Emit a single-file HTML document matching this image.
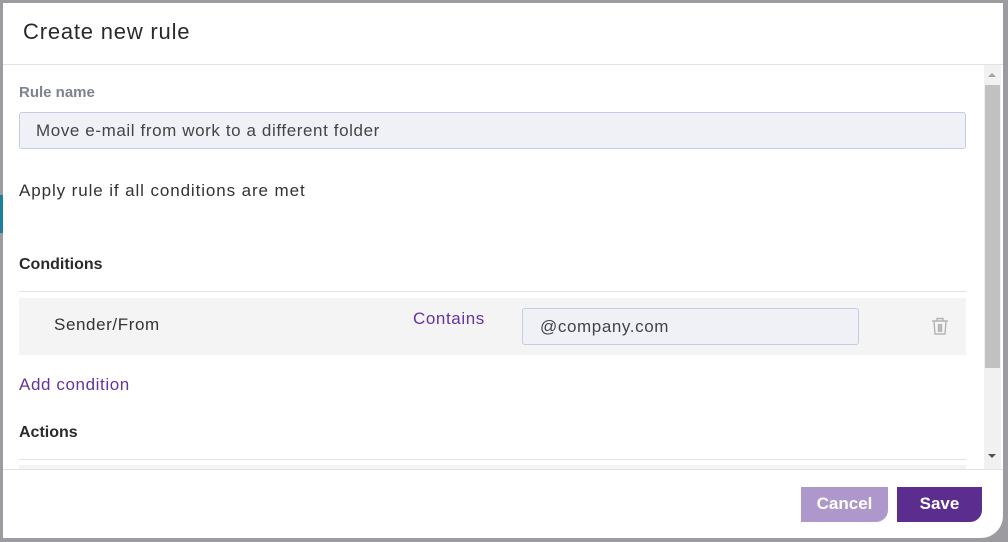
<!DOCTYPE html>
<html><head><meta charset="utf-8"><style>
*{margin:0;padding:0;box-sizing:border-box}
body{width:1008px;height:542px;background:#9c9ca0;position:relative;overflow:hidden;font-family:"Liberation Sans",sans-serif;color:#333}
.dlg{position:absolute;left:3px;top:3px;width:1000px;height:535px;background:#fff;border-bottom-right-radius:22px;overflow:hidden}
.a{position:absolute}
.t{letter-spacing:0.6px}
</style></head><body>
<div class="a" style="left:0;top:195px;width:3px;height:38px;background:#1a7fa0"></div>
<div class="dlg">
 <div class="a" style="left:20px;top:16px;font-size:22px;color:#2a2a2a;letter-spacing:0.8px">Create new rule</div>
 <div class="a" style="left:0;top:61px;width:1000px;height:1px;background:#e2e2e2"></div>
 <div class="a" style="left:16px;top:81px;font-size:15px;font-weight:bold;color:#7d8290">Rule name</div>
 <div class="a t" style="left:16px;top:109px;width:947px;height:37px;background:#f0f1f7;border:1px solid #c5cbe3;border-radius:3px;font-size:17px;color:#444;padding:8px 0 0 16px">Move e-mail from work to a different folder</div>
 <div class="a t" style="left:16px;top:178px;font-size:17px;color:#333;letter-spacing:0.9px">Apply rule if all conditions are met</div>
 <div class="a" style="left:16px;top:253px;font-size:16px;font-weight:bold;color:#2a2a2a">Conditions</div>
 <div class="a" style="left:16px;top:288px;width:947px;height:1px;background:#e2e2e2"></div>
 <div class="a" style="left:16px;top:295px;width:947px;height:57px;background:#f4f4f4"></div>
 <div class="a t" style="left:51px;top:312px;font-size:17px;color:#333">Sender/From</div>
 <div class="a t" style="left:410px;top:306px;font-size:17px;color:#6633a0">Contains</div>
 <div class="a t" style="left:519px;top:305px;width:337px;height:37px;background:#f0f1f7;border:1px solid #c5cbe3;border-radius:3px;font-size:17px;color:#444;padding:8px 0 0 17px">@company.com</div>
 <svg class="a" style="left:927px;top:313px" width="20" height="20" viewBox="0 0 20 20" fill="none" stroke="#b4b4b4" stroke-width="1.4"><path d="M2 5h16M7 5V2.5h6V5M4 5l1 13h10l1-13M8.5 8v8M10 8v8M11.5 8v8"/></svg>
 <div class="a t" style="left:16px;top:372px;font-size:17px;color:#6633a0">Add condition</div>
 <div class="a" style="left:16px;top:421px;font-size:16px;font-weight:bold;color:#2a2a2a">Actions</div>
 <div class="a" style="left:16px;top:456px;width:947px;height:1px;background:#e2e2e2"></div>
 <div class="a" style="left:16px;top:462px;width:947px;height:4px;background:#f4f4f4"></div>
 <div class="a" style="left:981px;top:62px;width:17px;height:404px;background:#f1f1f1"></div>
 <div class="a" style="left:982px;top:82px;width:15px;height:283px;background:#c1c1c1"></div>
 <div class="a" style="left:985px;top:70px;width:0;height:0;border-left:4px solid transparent;border-right:4px solid transparent;border-bottom:4px solid #a3a3a3"></div>
 <div class="a" style="left:985px;top:451px;width:0;height:0;border-left:4px solid transparent;border-right:4px solid transparent;border-top:4px solid #505050"></div>
 <div class="a" style="left:0;top:466px;width:1000px;height:1px;background:#e2e2e2"></div>
 <div class="a" style="left:798px;top:484px;width:87px;height:35px;background:#ae98cb;border-bottom-right-radius:12px;color:#fff;font-size:17px;font-weight:bold;text-align:center;line-height:34px">Cancel</div>
 <div class="a" style="left:894px;top:484px;width:85px;height:35px;background:#5b2d8e;border-bottom-right-radius:12px;color:#fff;font-size:17px;font-weight:bold;text-align:center;line-height:34px">Save</div>
</div>
</body></html>
